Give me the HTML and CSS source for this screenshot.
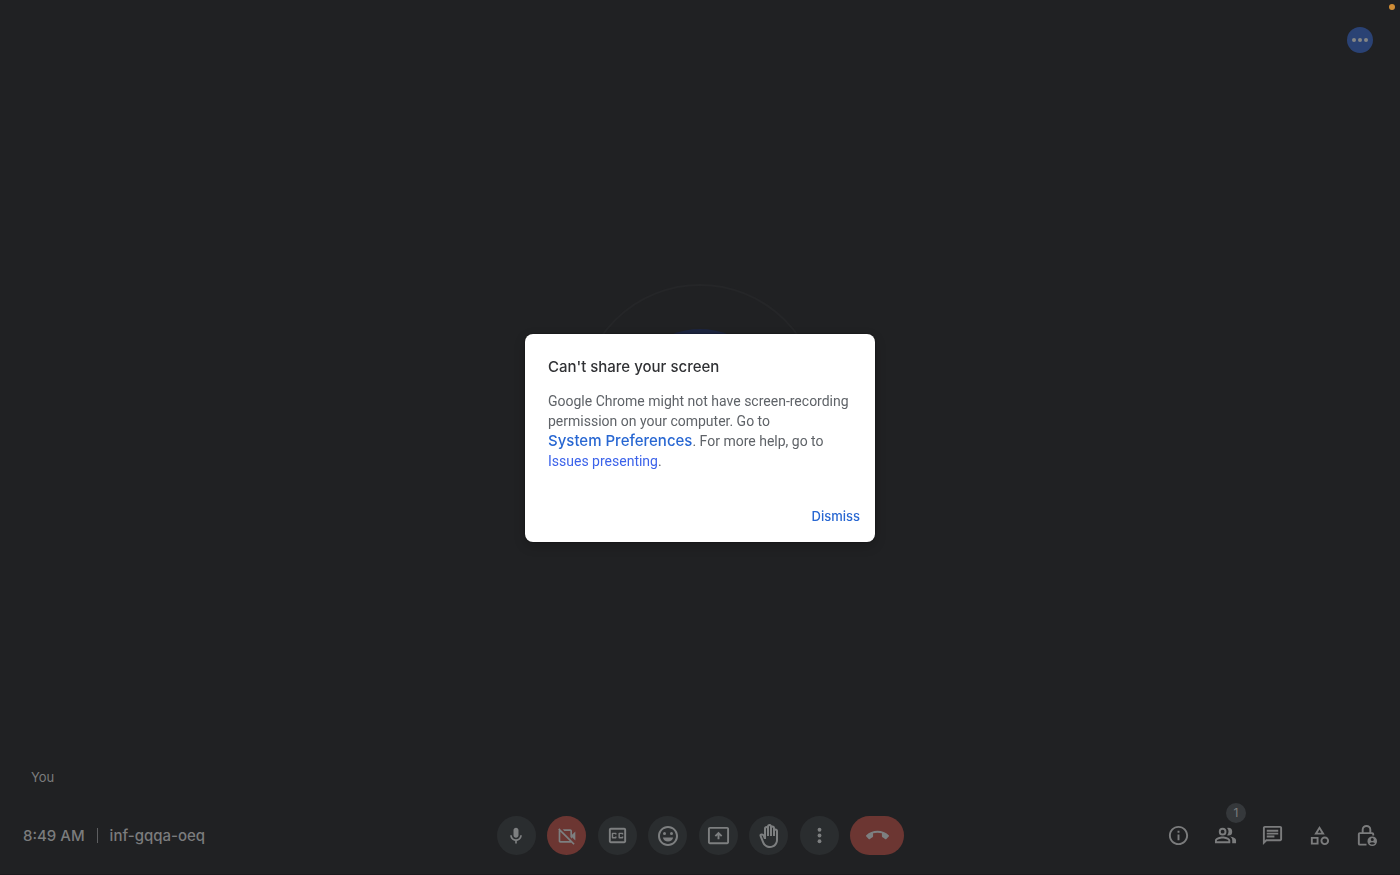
FILE: index.html
```html
<!DOCTYPE html>
<html lang="en">
<head>
<meta charset="utf-8">
<title>Meet - inf-gqqa-oeq</title>
<meta name="viewport" content="width=device-width, initial-scale=1">
<link rel="stylesheet" href="styles.css">
</head>
<body>
<div class="call">
  <span class="recording-dot"></span>
  <main class="stage">
    <button class="tile-more" type="button" aria-label="More options">
      <svg viewBox="0 0 26 26"><circle cx="7" cy="13" r="2"/><circle cx="13" cy="13" r="2"/><circle cx="19" cy="13" r="2"/></svg>
    </button>
    <div class="ring"><div class="avatar"></div></div>
    <span class="name">You</span>
  </main>
  <footer class="bar">
    <div class="meeting">
      <span>8:49 AM</span><span class="divider"></span><span>inf-gqqa-oeq</span>
    </div>
    <div class="controls">
      <button class="control" type="button" aria-label="Turn off microphone">
        <svg class="small" viewBox="0 0 24 24"><path d="M12 14c1.66 0 3-1.34 3-3V5c0-1.66-1.34-3-3-3S9 3.34 9 5v6c0 1.66 1.34 3 3 3zm5-3c0 2.76-2.24 5-5 5s-5-2.24-5-5H5c0 3.53 2.61 6.43 6 6.92V21h2v-3.08c3.39-.49 6-3.39 6-6.92h-2z"/></svg>
      </button>
      <button class="control off" type="button" aria-label="Turn on camera">
        <svg class="small" viewBox="0 0 24 24"><path d="M18 10.480V6c0-1.100-.9-2-2-2H6.830l2 2H16v7.170l2 2v-1.650l4 3.980v-11l-4 3.980zM16 16L6 6 4 4 2.810 2.810 1.390 4.220l.85.85C2.090 5.350 2 5.660 2 6v12c0 1.100.9 2 2 2h12c.34 0 .65-.09.93-.24l2.850 2.850 1.410-1.410L18 18l-2-2zM4 18V6.830L15.170 18H4z"/></svg>
      </button>
      <button class="control" type="button" aria-label="Turn on captions">
        <svg viewBox="0 0 24 24"><path d="M19 4H5c-1.110 0-2 .9-2 2v12c0 1.100.89 2 2 2h14c1.100 0 2-.9 2-2V6c0-1.100-.9-2-2-2zm0 14H5V6h14v12zM7 15h3c.55 0 1-.45 1-1v-1H9.500v.5h-2v-3h2v.5H11v-1c0-.55-.45-1-1-1H7c-.55 0-1 .45-1 1v4c0 .55.45 1 1 1zm7 0h3c.55 0 1-.45 1-1v-1h-1.500v.5h-2v-3h2v.5H18v-1c0-.55-.45-1-1-1h-3c-.55 0-1 .45-1 1v4c0 .55.45 1 1 1z"/></svg>
      </button>
      <button class="control" type="button" aria-label="Send a reaction">
        <svg class="large" viewBox="0 0 24 24"><path d="M12 2C6.470 2 2 6.500 2 12s4.470 10 10 10 10-4.480 10-10S17.520 2 12 2zm0 18c-4.420 0-8-3.580-8-8s3.580-8 8-8 8 3.580 8 8-3.580 8-8 8z"/><circle cx="8.500" cy="9.500" r="1.500"/><circle cx="15.500" cy="9.500" r="1.500"/><path d="M6.800 13.500a5.400 5.400 0 0 0 10.400 0z"/></svg>
      </button>
      <button class="control" type="button" aria-label="Present now">
        <svg viewBox="0 0 24 24"><path d="M21 3H3c-1.110 0-2 .89-2 2v14c0 1.110.89 2 2 2h18c1.110 0 2-.89 2-2V5c0-1.110-.89-2-2-2zm0 16H3V5h18v14zM11 16h2v-4.200l1.600 1.600L16 12l-4-4-4 4 1.400 1.400 1.600-1.600z"/></svg>
      </button>
      <button class="control" type="button" aria-label="Raise hand">
        <svg class="large" viewBox="0 0 24 24"><path d="M21 7c0-1.380-1.120-2.500-2.500-2.500-.17 0-.34.020-.5.050V4c0-1.380-1.120-2.500-2.500-2.500-.23 0-.46.030-.67.090C14.460.66 13.560 0 12.500 0c-1.230 0-2.250.89-2.460 2.060C9.870 2.020 9.690 2 9.500 2 8.120 2 7 3.120 7 4.500v5.890c-.34-.31-.76-.54-1.220-.66L5.010 9.520c-.83-.23-1.700.090-2.190.83-.38.57-.4 1.310-.15 1.950l2.560 6.430C6.490 21.910 9.570 24 13 24c4.420 0 8-3.580 8-8V7zm-2 9c0 3.310-2.690 6-6 6-2.610 0-4.950-1.590-5.910-4.010l-2.600-6.540.53.140c.46.12.83.46 1 .9L7 15h2V4.500c0-.28.22-.5.500-.5s.5.220.5.500V12h2V2.500c0-.28.22-.5.500-.5s.5.220.5.500V12h2V4c0-.28.22-.5.500-.5s.5.220.5.500v8h2V7c0-.28.22-.5.500-.5s.5.220.5.500v9z"/></svg>
      </button>
      <button class="control" type="button" aria-label="More options">
        <svg viewBox="0 0 24 24"><circle cx="12" cy="6" r="2"/><circle cx="12" cy="12" r="2"/><circle cx="12" cy="18" r="2"/></svg>
      </button>
      <button class="control off leave" type="button" aria-label="Leave call">
        <svg viewBox="0 0 24 24"><path d="M12 7C7.460 7 3.340 8.780.29 11.670c-.18.18-.29.43-.29.710 0 .28.110.53.290.7l2.480 2.480c.18.18.43.29.71.29.27 0 .52-.11.7-.28.79-.74 1.690-1.360 2.660-1.850.33-.16.56-.5.56-.9v-3.100C8.850 9.250 10.400 9 12 9s3.150.25 4.590.73v3.100c0 .4.23.74.56.9.98.49 1.870 1.120 2.670 1.850.18.18.43.28.7.28.28 0 .53-.11.71-.29l2.480-2.480c.18-.18.29-.43.29-.71s-.12-.52-.3-.7C20.660 8.780 16.540 7 12 7z"/></svg>
      </button>
    </div>
    <div class="tools">
      <button class="tool" type="button" aria-label="Meeting details">
        <svg viewBox="0 0 24 24"><path d="M11 7h2v2h-2zm0 4h2v6h-2zm1-9C6.480 2 2 6.480 2 12s4.480 10 10 10 10-4.480 10-10S17.520 2 12 2zm0 18c-4.410 0-8-3.590-8-8s3.590-8 8-8 8 3.590 8 8-3.590 8-8 8z"/></svg>
      </button>
      <button class="tool" type="button" aria-label="People">
        <svg viewBox="0 0 24 24"><path d="M9 4a4 4 0 1 0 0 8 4 4 0 0 0 0-8zm0 6a2 2 0 1 1 0-4 2 2 0 0 1 0 4zM15 12a4 4 0 0 0 0-8c-.47 0-.91.100-1.330.24a6 6 0 0 1 0 7.520c.42.140.86.240 1.330.240zM9 13c-2.670 0-8 1.340-8 4v3h16v-3c0-2.660-5.330-4-8-4zm6 5H3v-.990C3.200 16.290 6.300 15 9 15s5.800 1.290 6 2v1zM16.670 13.130C18.040 14.060 19 15.320 19 17v3h4v-3c0-2.180-3.570-3.470-6.330-3.870z"/></svg>
        <span class="badge">1</span>
      </button>
      <button class="tool" type="button" aria-label="Chat">
        <svg viewBox="0 0 24 24"><path d="M4 4h16v12H5.170L4 17.170V4m0-2c-1.100 0-1.990.9-1.990 2L2 22l4-4h14c1.100 0 2-.9 2-2V4c0-1.100-.9-2-2-2H4zm2 10h8v2H6v-2zm0-3h12v2H6V9zm0-3h12v2H6V6z"/></svg>
      </button>
      <button class="tool" type="button" aria-label="Activities">
        <svg viewBox="0 0 24 24"><path d="M12 2l-5.500 9h11L12 2zm0 3.840L13.930 9h-3.870L12 5.840zM17.500 13c-2.490 0-4.500 2.010-4.500 4.500s2.010 4.500 4.500 4.500 4.500-2.010 4.500-4.500-2.010-4.500-4.500-4.500zm0 7a2.500 2.500 0 1 1 0-5 2.500 2.500 0 0 1 0 5zM3 21.500h8v-8H3v8zm2-6h4v4H5v-4z"/></svg>
      </button>
      <button class="tool" type="button" aria-label="Host controls">
        <svg viewBox="0 0 24 24"><path fill-rule="evenodd" d="M18 8.500h-1V6A5 5 0 0 0 7 6v2.500H5a2 2 0 0 0-2 2v10a2 2 0 0 0 2 2h7v-2H5v-10h13v1.500h2v-1.500a2 2 0 0 0-2-2zM9 6a3 3 0 0 1 6 0v2.500H9zM18 13a5 5 0 1 0 0 10 5 5 0 0 0 0-10zm0 1.600a1.600 1.600 0 1 1 0 3.200 1.600 1.600 0 0 1 0-3.200zm0 6.900c-1.200 0-2.200-.6-2.900-1.500.8-.7 1.900-1 2.900-1s2.100.3 2.900 1c-.7.900-1.700 1.500-2.900 1.500z"/></svg>
      </button>
    </div>
  </footer>
</div>
<dialog class="dialog" open aria-labelledby="dialog-title">
  <h1 id="dialog-title" class="dialog-title">Can't share your screen</h1>
  <p class="dialog-text">Google Chrome might not have screen-recording permission on your computer. Go to <a class="settings-link" href="#">System Preferences</a>. For more help, go to <a class="help-link" href="#">Issues presenting</a>.</p>
  <div class="dialog-actions"><button class="dismiss" type="button">Dismiss</button></div>
</dialog>
</body>
</html>
```
FILE: styles.css
```css
* {
  box-sizing: border-box;
}

body {
  margin: 0;
  background: #202123;
  color: #7b7c7d;
  font-family: "Google Sans", Inter, Roboto, sans-serif;
}

button {
  margin: 0;
  padding: 0;
  border: 0;
  background: none;
  color: inherit;
  font: inherit;
  cursor: pointer;
}

svg {
  display: block;
  fill: currentColor;
}

.call {
  display: flex;
  flex-direction: column;
  min-height: 100vh;
  border-bottom: 1px solid #1b1a1d;
}

.recording-dot {
  position: absolute;
  top: 4px;
  right: 5px;
  width: 6px;
  height: 6px;
  border-radius: 50%;
  background: #d08d36;
}

.stage {
  position: relative;
  flex: 1;
  display: flex;
  align-items: center;
  justify-content: center;
}

.tile-more {
  position: absolute;
  top: 27px;
  right: 27px;
  width: 26px;
  height: 26px;
  border-radius: 50%;
  background: #2a4274;
  color: #848585;
}

.ring {
  display: flex;
  align-items: center;
  justify-content: center;
  width: 242px;
  height: 242px;
  border: 2px solid #252628;
  border-radius: 50%;
}

.avatar {
  width: 152px;
  height: 152px;
  border-radius: 50%;
  background: #1d2540;
}

.name {
  position: absolute;
  left: 31px;
  bottom: 22px;
  font-size: 13px;
  line-height: 20px;
}

.bar {
  display: grid;
  grid-template-columns: 1fr 408px 1fr;
  align-items: center;
  padding: 7px 10px 19px 23px;
}

.meeting {
  display: flex;
  align-items: center;
  gap: 12px;
  font-size: 15px;
  font-weight: 500;
}

.divider {
  width: 1px;
  height: 15px;
  background: #5d5e60;
}

.controls {
  display: flex;
  justify-content: space-between;
  margin: 0 6px 0 -6px;
}

.control {
  display: flex;
  align-items: center;
  justify-content: center;
  width: 39px;
  height: 39px;
  border-radius: 20px;
  background: #2a2d2f;
  color: #7d7f80;
}

.control svg,
.tool svg {
  width: 23px;
  height: 23px;
}

.control .small {
  width: 20px;
  height: 20px;
}

.control .large {
  width: 24px;
  height: 24px;
}

.off {
  background: #6c3632;
}

.leave {
  width: 54px;
}

.tools {
  display: flex;
  justify-content: flex-end;
}

.tool {
  position: relative;
  display: flex;
  align-items: center;
  justify-content: center;
  width: 47px;
  height: 39px;
}

.badge {
  position: absolute;
  top: -13px;
  right: 3px;
  width: 20px;
  border-radius: 50%;
  background: #35383b;
  font-size: 12px;
  line-height: 20px;
  text-align: center;
}

.dialog {
  position: fixed;
  inset: 0;
  width: 350px;
  height: fit-content;
  margin: auto;
  padding: 23px 15px 16px 23px;
  border: 0;
  border-radius: 8px;
  background: #fff;
  box-shadow: 0 0 2px #0009, 0 4px 12px #0003;
  color: #5f6368;
}

.dialog-title {
  margin: 0 0 14px;
  color: #303134;
  font-size: 15px;
  line-height: 20px;
  font-weight: 500;
}

.dialog-text {
  margin: 0 0 35px;
  font-family: Roboto, sans-serif;
  font-size: 14px;
  line-height: 20px;
}

.dialog-text a {
  white-space: nowrap;
  text-decoration: none;
}

.settings-link {
  display: inline-block;
  color: #2867d2;
  font-family: "Google Sans", Inter, Roboto, sans-serif;
  font-size: 15px;
  font-weight: 500;
}

.help-link {
  color: #3c63ea;
}

.dialog-actions {
  display: flex;
  justify-content: flex-end;
}

.dismiss {
  color: #2867d2;
  font-size: 13px;
  line-height: 20px;
  font-weight: 500;
}
```
